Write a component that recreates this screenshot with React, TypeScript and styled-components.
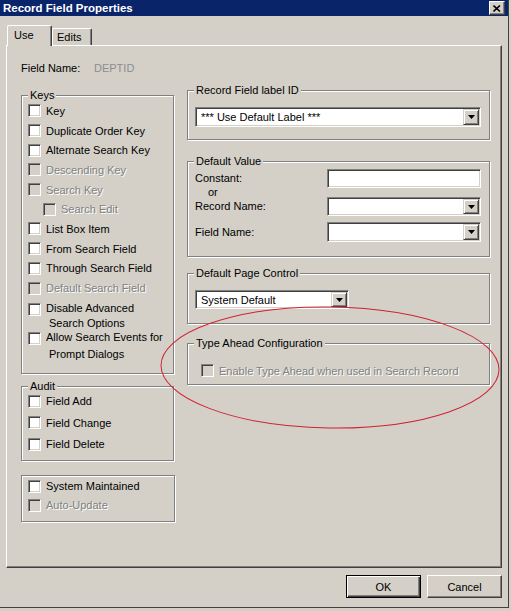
import React from "react";
import styled, { createGlobalStyle } from "styled-components";

const GlobalStyle = createGlobalStyle`
  html, body {
    margin: 0;
    padding: 0;
    background: #d4d0c8;
  }
  body {
    font-family: "Liberation Sans", Arial, sans-serif;
    font-size: 11px;
    color: #000;
  }
`;

const keyItems: { label: string[]; disabled?: boolean; indent?: boolean }[] = [
    {label: ["Key"]},
    {label: ["Duplicate Order Key"]},
    {label: ["Alternate Search Key"]},
    {label: ["Descending Key"], disabled: true},
    {label: ["Search Key"], disabled: true},
    {label: ["Search Edit"], disabled: true, indent: true},
    {label: ["List Box Item"]},
    {label: ["From Search Field"]},
    {label: ["Through Search Field"]},
    {label: ["Default Search Field"], disabled: true},
];

const CheckBox: React.FC<{ disabled?: boolean }> = ({disabled}) => (
    <Box $disabled={disabled}/>
);

const Combo: React.FC<{ value?: string; width: number; height: number }> = ({
                                                                                value,
                                                                                width,
                                                                                height,
                                                                            }) => (
    <ComboBox style={{width, height}}>
        <ComboText>{value}</ComboText>
        <DropButton>
            <svg width="7" height="4" viewBox="0 0 7 4">
                <polygon points="0,0 7,0 3.5,4" fill="#000"/>
            </svg>
        </DropButton>
    </ComboBox>
);

const App: React.FC = () => {
    return (
        <>
            <GlobalStyle/>
            <Dialog>
                <TitleBar>
                    <Title>Record Field Properties</Title>
                    <CloseButton>
                        <svg width="8" height="7" viewBox="0 0 8 7">
                            <path d="M0.5 0.5 L7 6.5 M7 0.5 L0.5 6.5" stroke="#000" strokeWidth="1.6"/>
                        </svg>
                    </CloseButton>
                </TitleBar>

                <TabStrip>
                    <Tab $active>Use</Tab>
                    <Tab>Edits</Tab>
                </TabStrip>

                <Panel>
                    <FieldRow>
                        <FieldLabel>Field Name:</FieldLabel>
                        <FieldValue>DEPTID</FieldValue>
                    </FieldRow>

                    <Columns>
                        <LeftCol>
                            <KeysGroup>
                                <GroupLabel>Keys</GroupLabel>
                                {keyItems.map((item) => (
                                    <Row key={item.label[0]} $indent={item.indent}>
                                        <CheckBox disabled={item.disabled}/>
                                        <Label $disabled={item.disabled}>{item.label[0]}</Label>
                                    </Row>
                                ))}
                                <TallRow $height={29} $line={15}>
                                    <CheckBox/>
                                    <Label>
                                        <Line>Disable Advanced</Line>
                                        <Line $indent>Search Options</Line>
                                    </Label>
                                </TallRow>
                                <TallRow $height={36} $line={17}>
                                    <CheckBox/>
                                    <Label>
                                        <Line>Allow Search Events for</Line>
                                        <Line $indent>Prompt Dialogs</Line>
                                    </Label>
                                </TallRow>
                            </KeysGroup>

                            <AuditGroup>
                                <GroupLabel>Audit</GroupLabel>
                                {["Field Add", "Field Change", "Field Delete"].map((l) => (
                                    <AuditRow key={l}>
                                        <CheckBox/>
                                        <Label>{l}</Label>
                                    </AuditRow>
                                ))}
                            </AuditGroup>

                            <SystemGroup>
                                <SystemRow>
                                    <CheckBox/>
                                    <Label>System Maintained</Label>
                                </SystemRow>
                                <SystemRow>
                                    <CheckBox disabled/>
                                    <Label $disabled>Auto-Update</Label>
                                </SystemRow>
                            </SystemGroup>
                        </LeftCol>

                        <RightCol>
                            <LabelIdGroup>
                                <GroupLabel>Record Field label ID</GroupLabel>
                                <Combo value="*** Use Default Label ***" width={286} height={20}/>
                            </LabelIdGroup>

                            <DefaultValueGroup>
                                <GroupLabel>Default Value</GroupLabel>
                                <ValueGrid>
                                    <GridLabel>Constant:</GridLabel>
                                    <TextInput/>
                                    <OrLabel>or</OrLabel>
                                    <span/>
                                    <GridLabel>Record Name:</GridLabel>
                                    <Combo width={154} height={19}/>
                                    <GridLabel $end>Field Name:</GridLabel>
                                    <EndCell>
                                        <Combo width={154} height={20}/>
                                    </EndCell>
                                </ValueGrid>
                            </DefaultValueGroup>

                            <PageControlGroup>
                                <GroupLabel>Default Page Control</GroupLabel>
                                <Combo value="System Default" width={154} height={19}/>
                            </PageControlGroup>

                            <TypeAheadGroup>
                                <GroupLabel>Type Ahead Configuration</GroupLabel>
                                <Row>
                                    <CheckBox disabled/>
                                    <Label $disabled>Enable Type Ahead when used in Search Record</Label>
                                </Row>
                            </TypeAheadGroup>
                        </RightCol>
                    </Columns>
                </Panel>

                <ButtonRow>
                    <Button $primary>OK</Button>
                    <Button>Cancel</Button>
                </ButtonRow>

                <Annotation width="511" height="611" viewBox="0 0 511 611">
                    <ellipse
                        cx="330"
                        cy="367.5"
                        rx="169"
                        ry="60.5"
                        fill="none"
                        stroke="#cf2030"
                        strokeWidth="1"
                        transform="rotate(0.8 330 367.5)"
                    />
                </Annotation>
            </Dialog>
        </>
    );
};

const Dialog = styled.div`
  position: relative;
  width: 508px;
  height: 607px;
  border-right: 1px solid #404040;
  border-bottom: 1px solid #404040;
  display: flex;
  flex-direction: column;
  background: #d4d0c8;
`;

const TitleBar = styled.div`
  height: 16px;
  background: #0a246a;
  display: flex;
  align-items: center;
  justify-content: space-between;
  padding: 0 3px 0 3px;
`;

const Title = styled.span`
  color: #fff;
  font-weight: bold;
  font-size: 11.5px;
  line-height: 16px;
`;

const CloseButton = styled.div`
  box-sizing: border-box;
  width: 16px;
  height: 14px;
  display: flex;
  align-items: center;
  justify-content: center;
  background: #d4d0c8;
  border: 1px solid;
  border-color: #fff #404040 #404040 #fff;
  box-shadow: inset -1px -1px 0 #808080;
`;

const TabStrip = styled.div`
  display: flex;
  align-items: flex-end;
  height: 20px;
  margin-top: 9px;
  padding-left: 7px;
`;

const Tab = styled.div<{ $active?: boolean }>`
  position: relative;
  z-index: 1;
  box-sizing: border-box;
  height: ${(p) => (p.$active ? "21px" : "17px")};
  margin-bottom: ${(p) => (p.$active ? "-1px" : "0")};
  padding: ${(p) => (p.$active ? "3px 12px 0 6px" : "2px 12px 0 4px")};
  width: ${(p) => (p.$active ? "45px" : "40px")};
  background: #d4d0c8;
  border-top: 1px solid #fff;
  border-left: 1px solid #fff;
  border-right: 1px solid #404040;
  box-shadow: inset -1px 0 0 #808080;
  border-radius: 2px 2px 0 0;
  line-height: 13px;
`;

const Panel = styled.div`
  box-sizing: border-box;
  margin-left: 6px;
  width: 496px;
  height: 523px;
  border: 1px solid;
  border-color: #fff #404040 #404040 #fff;
  box-shadow: inset -1px -1px 0 #808080;
  padding: 15px 0 0 14px;
`;

const FieldRow = styled.div`
  display: flex;
  height: 14px;
  line-height: 14px;
`;

const FieldLabel = styled.span`
  width: 73px;
`;

const FieldValue = styled.span`
  color: #8c8c8c;
`;

const Columns = styled.div`
  display: grid;
  grid-template-columns: 153px 303px;
  column-gap: 13px;
  align-items: start;
  margin-top: 15px;
`;

const LeftCol = styled.div`
  display: flex;
  flex-direction: column;
  padding-top: 5px;
`;

const RightCol = styled.div`
  display: flex;
  flex-direction: column;
`;

const GroupBox = styled.div`
  position: relative;
  box-sizing: border-box;
  border: 1px solid #808080;
  box-shadow: 1px 1px 0 #fff, inset 1px 1px 0 #fff;
  display: flex;
  flex-direction: column;
`;

const GroupLabel = styled.span`
  position: absolute;
  top: -7px;
  left: 6px;
  padding: 0 2px 0 2px;
  background: #d4d0c8;
  line-height: 13px;
  white-space: nowrap;
`;

const KeysGroup = styled(GroupBox)`
  height: 279px;
  padding: 5px 0 0 6px;
`;

const AuditGroup = styled(GroupBox)`
  height: 75px;
  margin-top: 12px;
  padding: 3.5px 0 0 6px;
`;

const SystemGroup = styled(GroupBox)`
  height: 47px;
  width: 154px;
  margin-top: 14px;
  padding: 0.5px 0 0 6px;
`;

const LabelIdGroup = styled(GroupBox)`
  height: 50px;
  padding: 16px 0 0 7px;
`;

const DefaultValueGroup = styled(GroupBox)`
  height: 96px;
  margin-top: 21px;
  padding: 7px 0 0 7px;
`;

const PageControlGroup = styled(GroupBox)`
  height: 51px;
  margin-top: 16px;
  padding: 16px 0 0 7px;
`;

const TypeAheadGroup = styled(GroupBox)`
  height: 42px;
  margin-top: 19px;
  padding: 17px 0 0 13px;
`;

const Row = styled.div<{ $indent?: boolean }>`
  display: flex;
  align-items: center;
  gap: 5px;
  height: 19.7px;
  padding-left: ${(p) => (p.$indent ? "15px" : "0")};
  white-space: nowrap;
`;

const TallRow = styled.div<{ $height: number; $line: number }>`
  display: flex;
  align-items: flex-start;
  gap: 5px;
  height: ${(p) => p.$height}px;
  line-height: ${(p) => p.$line}px;
  white-space: nowrap;

  & > span:first-child {
    margin-top: 5px;
  }

  & > span:last-child {
    margin-top: ${(p) => (p.$line === 15 ? 3 : 2)}px;
  }
`;

const AuditRow = styled(Row)`
  height: 21.5px;
`;

const SystemRow = styled(Row)`
  height: 19px;
`;

const Box = styled.span<{ $disabled?: boolean }>`
  box-sizing: border-box;
  flex: none;
  width: 13px;
  height: 13px;
  border: 1px solid;
  border-color: #808080 #fff #fff #808080;
  box-shadow: inset 1px 1px 0 #404040, inset -1px -1px 0 #d4d0c8;
  background: ${(p) => (p.$disabled ? "#d4d0c8" : "#fff")};
`;

const Label = styled.span<{ $disabled?: boolean }>`
  color: ${(p) => (p.$disabled ? "#808080" : "#000")};
  text-shadow: ${(p) => (p.$disabled ? "1px 1px 0 #fff" : "none")};
`;

const Line = styled.span<{ $indent?: boolean }>`
  display: block;
  padding-left: ${(p) => (p.$indent ? "3px" : "0")};
`;

const ValueGrid = styled.div`
  display: grid;
  grid-template-columns: 132px 154px;
  grid-template-rows: 19px 9px 19px 26px;
  align-items: center;
`;

const GridLabel = styled.span<{ $end?: boolean }>`
  line-height: 13px;
  align-self: ${(p) => (p.$end ? "end" : "center")};
  margin-bottom: ${(p) => (p.$end ? "3px" : "0")};
`;

const OrLabel = styled.span`
  line-height: 9px;
  padding-left: 13px;
`;

const EndCell = styled.div`
  align-self: end;
`;

const TextInput = styled.div`
  box-sizing: border-box;
  width: 154px;
  height: 19px;
  background: #fff;
  border: 1px solid;
  border-color: #808080 #fff #fff #808080;
  box-shadow: inset 1px 1px 0 #404040, inset -1px -1px 0 #d4d0c8;
`;

const ComboBox = styled.div`
  box-sizing: border-box;
  display: flex;
  align-items: stretch;
  background: #fff;
  border: 1px solid;
  border-color: #808080 #fff #fff #808080;
  box-shadow: inset 1px 1px 0 #404040, inset -1px -1px 0 #d4d0c8;
  padding: 1px 1px 1px 1px;
`;

const ComboText = styled.span`
  flex: 1;
  padding-left: 4px;
  display: flex;
  align-items: center;
  white-space: nowrap;
`;

const DropButton = styled.span`
  box-sizing: border-box;
  width: 16px;
  display: flex;
  align-items: center;
  justify-content: center;
  background: #d4d0c8;
  border: 1px solid;
  border-color: #d4d0c8 #404040 #404040 #d4d0c8;
  box-shadow: inset 1px 1px 0 #fff, inset -1px -1px 0 #808080;
`;

const ButtonRow = styled.div`
  display: flex;
  justify-content: flex-end;
  gap: 6px;
  margin-top: 7px;
  padding-right: 6px;
`;

const Button = styled.div<{ $primary?: boolean }>`
  box-sizing: border-box;
  width: 75px;
  height: 23px;
  display: flex;
  align-items: center;
  justify-content: center;
  background: #d4d0c8;
  border: 1px solid;
  border-color: ${(p) => (p.$primary ? "#000" : "#fff #404040 #404040 #fff")};
  box-shadow: ${(p) =>
    p.$primary
        ? "inset 1px 1px 0 #fff, inset -1px -1px 0 #404040, inset -2px -2px 0 #808080"
        : "inset -1px -1px 0 #808080"};
`;

const Annotation = styled.svg`
  position: absolute;
  top: 0;
  left: 0;
  pointer-events: none;
`;

export default App;
